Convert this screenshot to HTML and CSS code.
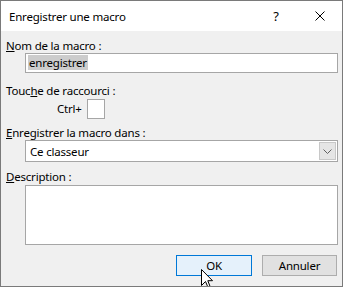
FILE: index.html
```
<!DOCTYPE html>
<html lang="fr">
<head>
  <meta charset="UTF-8">
  <title>Enregistrer une macro</title>
  <link rel="stylesheet" href="styles.css">
</head>
<body>

<div class="window">
  <div class="titlebar">
    <span class="title">Enregistrer une macro</span>
    <span class="tb-btn help">?</span>
    <span class="tb-btn close">
      <svg width="10" height="10" viewBox="0 0 10 10"><path d="M0.5 0.5 L9.5 9.5 M9.5 0.5 L0.5 9.5" stroke="#000" stroke-width="1" fill="none"/></svg>
    </span>
  </div>

  <div class="content">
    <label class="lbl"><u>N</u>om de la macro :</label>
    <div class="field name-field"><span class="sel">enregistrer</span></div>

    <label class="lbl gap"><span>Touc<u>h</u>e de raccourci :</span></label>
    <div class="shortcut">
      <span class="ctrl">Ctrl+</span>
      <div class="keybox"></div>
    </div>

    <label class="lbl gap2"><u>E</u>nregistrer la macro dans :</label>
    <div class="field combo">
      <span class="combo-text">Ce classeur</span>
      <span class="combo-arrow">
        <svg width="9" height="5" viewBox="0 0 9 5"><path d="M0.5 0.5 L4.5 4.5 L8.5 0.5" stroke="#606060" stroke-width="1" fill="none"/></svg>
      </span>
    </div>

    <label class="lbl gap3"><u>D</u>escription :</label>
    <div class="field desc"></div>

    <div class="buttons">
      <button class="btn ok">OK</button>
      <button class="btn">Annuler</button>
    </div>
  </div>

  <svg class="cursor" width="13" height="20" viewBox="0 0 13 20"><path d="M0.5 0.5 L0.5 16.5 L4.5 12.5 L7.5 19.5 L9.5 18.5 L6.8 11.7 L11.5 11.7 Z" fill="#fff" stroke="#000" stroke-width="1" stroke-linejoin="miter"/></svg>
</div>

</body>
</html>
```

FILE: styles.css
```
body {
  margin: 0;
  padding: 0;
  background: #fff;
  font-family: "Noto Sans", "Open Sans", sans-serif;
  font-size: 11.5px;
  letter-spacing: -0.2px;
  color: #000;
}
.window {
  position: relative;
  width: 341px;
  height: 285px;
  border: 1px solid #7a7a7a;
  background: #f0f0f0;
  overflow: hidden;
}
.titlebar {
  display: flex;
  align-items: center;
  height: 30px;
  background: #fff;
}
.title {
  flex: 1;
  padding-left: 8px;
}
.tb-btn {
  display: flex;
  align-items: center;
  justify-content: center;
  width: 46px;
  height: 30px;
}
.help {
  font-size: 13px;
  padding-left: 4px;
  box-sizing: border-box;
}
.close {
  width: 45px;
  padding-bottom: 1px;
}
.content {
  padding: 7px 4px 0 5px;
}
.lbl {
  display: block;
  line-height: 15px;
  height: 15px;
}
.lbl u {
  text-underline-offset: 1px;
}
.gap { margin-top: 10px; }
.gap2 { margin-top: 6px; }
.gap3 { margin-top: 7px; }
.field {
  margin-left: 19px;
  background: #fff;
  border: 1px solid #a6a6a6;
  box-sizing: border-box;
}
.name-field {
  height: 20px;
  padding: 1px 2px;
  line-height: 16px;
}
.sel {
  background: #cccccc;
  padding: 0 1px;
}
.shortcut {
  display: flex;
  align-items: center;
  padding-left: 51px;
  height: 21px;
}
.ctrl {
  margin-right: 5px;
}
.keybox {
  width: 18px;
  height: 20px;
  box-sizing: border-box;
  background: #fff;
  border: 1px solid #a6a6a6;
}
.combo {
  display: flex;
  align-items: center;
  height: 22px;
}
.combo-text {
  flex: 1;
  padding-left: 4px;
}
.combo-arrow {
  display: flex;
  align-items: center;
  justify-content: center;
  width: 17px;
  height: 18px;
  margin-right: 1px;
  background: #e5e5e5;
  border: 1px solid #c8c8c8;
  box-sizing: border-box;
}
.desc {
  margin-top: 1px;
  height: 60px;
}
.buttons {
  display: flex;
  justify-content: flex-end;
  gap: 10px;
  margin-top: 10px;
  padding-right: 1px;
}
.btn {
  width: 75px;
  height: 21px;
  padding: 0;
  font-family: "Noto Sans", "Open Sans", sans-serif;
  font-size: 11.5px;
  letter-spacing: -0.2px;
  color: #000;
  background: #e1e1e1;
  border: 1px solid #adadad;
}
.btn.ok {
  width: 76px;
  background: #e5f1fb;
  border-color: #0078d7;
}
.cursor {
  position: absolute;
  left: 200px;
  top: 268px;
}
```
